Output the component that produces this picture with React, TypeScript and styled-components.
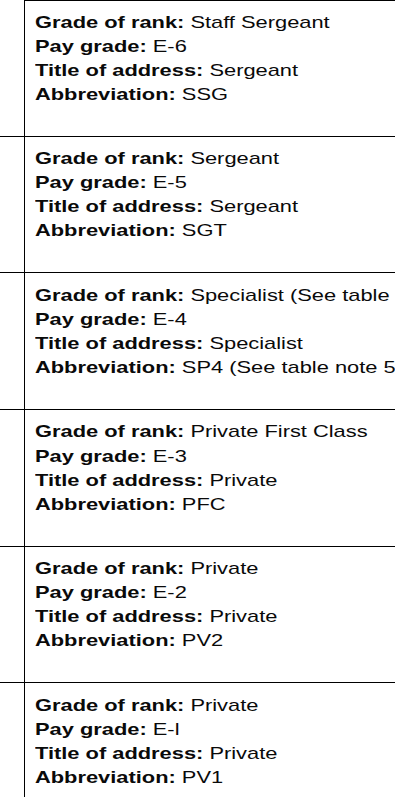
import React from 'react';
import styled, { createGlobalStyle } from 'styled-components';

const ranks = [
  { grade: 'Staff Sergeant', pay: 'E-6', title: 'Sergeant', abbr: 'SSG' },
  { grade: 'Sergeant', pay: 'E-5', title: 'Sergeant', abbr: 'SGT' },
  { grade: 'Specialist (See table', pay: 'E-4', title: 'Specialist', abbr: 'SP4 (See table note 5' },
  { grade: 'Private First Class', pay: 'E-3', title: 'Private', abbr: 'PFC' },
  { grade: 'Private', pay: 'E-2', title: 'Private', abbr: 'PV2' },
  { grade: 'Private', pay: 'E-l', title: 'Private', abbr: 'PV1' },
];

function App() {
  return (
    <>
      <GlobalStyle />
      <Table>
        {ranks.map((rank, i) => (
          <Row key={i}>
            <SideCell />
            <InfoCell $first={i === 0}>
              <TextBlock>
                <Line>
                  <Label>Grade of rank:</Label> {rank.grade}
                </Line>
                <Line>
                  <Label>Pay grade:</Label> {rank.pay}
                </Line>
                <Line>
                  <Label>Title of address:</Label> {rank.title}
                </Line>
                <Line>
                  <Label>Abbreviation:</Label> {rank.abbr}
                </Line>
              </TextBlock>
            </InfoCell>
          </Row>
        ))}
      </Table>
    </>
  );
}

const GlobalStyle = createGlobalStyle`
  html, body {
    margin: 0;
    padding: 0;
    background: #ffffff;
    overflow: hidden;
  }
  body {
    font-family: "Liberation Sans", Arial, sans-serif;
    color: #000;
  }
`;

const Table = styled.div`
  width: 395px;
  height: 797px;
  overflow: hidden;
  display: flex;
  flex-direction: column;
`;

const Row = styled.div`
  display: flex;
  flex: 0 0 136.67px;
  height: 136.67px;
  box-sizing: border-box;
  border-bottom: 1px solid #000;
`;

const SideCell = styled.div`
  width: 24px;
  flex: 0 0 24px;
  border-right: 1px solid #000;
`;

const InfoCell = styled.div<{ $first?: boolean }>`
  flex: 1;
  min-width: 0;
  overflow: hidden;
  box-sizing: border-box;
  padding: ${(p) => (p.$first ? '10px' : '10.5px')} 0 0 10px;
  border-top: ${(p) => (p.$first ? '1px solid #000' : 'none')};
`;

/* the source text is drawn wide, so stretch it sideways */
const TextBlock = styled.div`
  transform: scaleX(1.285);
  transform-origin: left top;
  width: max-content;
`;

const Line = styled.div`
  font-size: 17px;
  line-height: 24.1px;
  white-space: nowrap;
  color: #0a0a0a;
`;

const Label = styled.b`
  font-weight: bold;
`;

export default App;
